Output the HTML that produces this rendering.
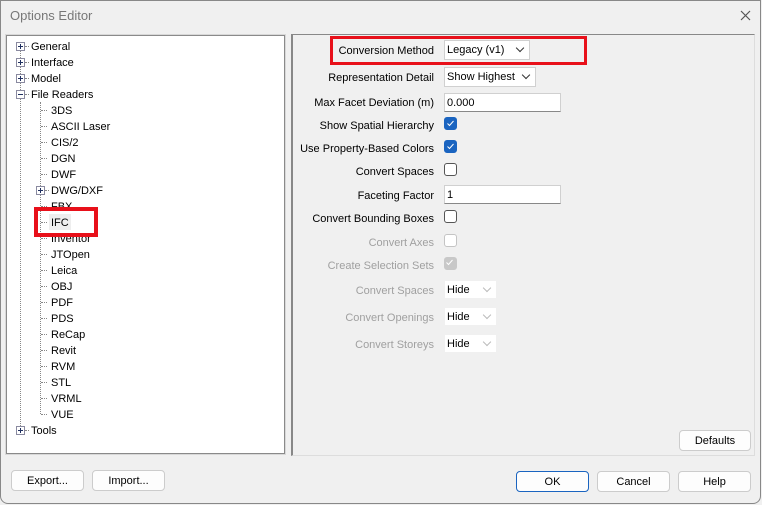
<!DOCTYPE html><html><head><style>
body{margin:0;width:762px;height:505px;background:#f0f0f0;font-family:"Liberation Sans",sans-serif;font-size:11px;color:#000;position:relative;overflow:hidden}
.a{position:absolute;white-space:nowrap}
.t{position:absolute;line-height:18px;height:16px}
.lb{position:absolute;right:328px;text-align:right;line-height:18px;white-space:nowrap}
.g{color:#a0a0a0}
.cb{position:absolute;width:11px;height:11px;border:1px solid #555;border-radius:3px;background:#fff;left:444px}
.ck{background:#1a64c0;border-color:#1a64c0}
.ck svg{position:absolute;left:1px;top:1px}
.dc{border-color:#c4c4c4;background:#fff}
.dk{background:#c8c8c8;border-color:#c8c8c8}
.in{position:absolute;background:#fff;border:1px solid #d0d0d0;border-bottom-color:#888;line-height:18px;padding-left:2px;box-sizing:border-box}
.cm{position:absolute;background:#fff;border:1px solid #d0d0d0;line-height:18px;padding-left:2px;box-sizing:border-box}
.cm i{position:absolute;right:6px;top:4px;width:5px;height:5px;border-right:1px solid #333;border-bottom:1px solid #333;transform:rotate(45deg)}
.cm.d i{border-color:#bbb}
.btn{position:absolute;background:#fdfdfd;border:1px solid #ccc;border-radius:4px;text-align:center;line-height:20px;box-sizing:border-box;height:21px}
.pl{position:absolute;width:9px;height:9px;border:1px solid #8a8aa0;background:#fff;box-sizing:border-box}
.pl:before{content:"";position:absolute;left:1px;top:3px;width:5px;height:1px;background:#203060}
.pl.p:after{content:"";position:absolute;left:3px;top:1px;width:1px;height:5px;background:#203060}
.hd{position:absolute;border-top:1px dotted #888;width:6px}
</style></head><body>
<div class="a" style="left:0;top:0;width:761px;height:504px;border:1px solid #888;border-radius:0 0 8px 8px;box-sizing:border-box"></div>
<div class="a" style="left:10px;top:8px;font-size:13px;color:#777">Options Editor</div>
<svg class="a" style="left:740px;top:10px" width="11" height="11"><path d="M1 1L10 10M10 1L1 10" stroke="#555" stroke-width="1.2"/></svg>

<div class="a" style="left:5px;top:34px;width:281px;height:421px;border:1px solid #d8d8d8;box-sizing:border-box"></div>
<div class="a" style="left:6px;top:35px;width:279px;height:419px;border:1px solid #8a8a8a;background:#fff;box-sizing:border-box"></div>
<div class="a" style="left:20px;top:51px;height:379px;border-left:1px dotted #888"></div>
<div class="a" style="left:40px;top:102px;height:312px;border-left:1px dotted #888"></div>
<div class="pl p" style="left:16px;top:42px"></div><div class="hd" style="left:25px;top:46px;width:4px"></div><div class="t" style="left:31px;top:38px">General</div>
<div class="pl p" style="left:16px;top:58px"></div><div class="hd" style="left:25px;top:62px;width:4px"></div><div class="t" style="left:31px;top:54px">Interface</div>
<div class="pl p" style="left:16px;top:74px"></div><div class="hd" style="left:25px;top:78px;width:4px"></div><div class="t" style="left:31px;top:70px">Model</div>
<div class="pl" style="left:16px;top:90px"></div><div class="hd" style="left:25px;top:94px;width:4px"></div><div class="t" style="left:31px;top:86px">File Readers</div>
<div class="hd" style="left:41px;top:110px"></div><div class="t" style="left:51px;top:102px">3DS</div>
<div class="hd" style="left:41px;top:126px"></div><div class="t" style="left:51px;top:118px">ASCII Laser</div>
<div class="hd" style="left:41px;top:142px"></div><div class="t" style="left:51px;top:134px">CIS/2</div>
<div class="hd" style="left:41px;top:158px"></div><div class="t" style="left:51px;top:150px">DGN</div>
<div class="hd" style="left:41px;top:174px"></div><div class="t" style="left:51px;top:166px">DWF</div>
<div class="pl p" style="left:36px;top:186px"></div><div class="hd" style="left:45px;top:190px;width:4px"></div><div class="t" style="left:51px;top:182px">DWG/DXF</div>
<div class="hd" style="left:41px;top:206px"></div><div class="t" style="left:51px;top:198px">FBX</div>
<div class="hd" style="left:41px;top:222px"></div><div class="t" style="left:49px;top:214px;background:#eee;padding:0 2px">IFC</div>
<div class="hd" style="left:41px;top:238px"></div><div class="t" style="left:51px;top:230px">Inventor</div>
<div class="hd" style="left:41px;top:254px"></div><div class="t" style="left:51px;top:246px">JTOpen</div>
<div class="hd" style="left:41px;top:270px"></div><div class="t" style="left:51px;top:262px">Leica</div>
<div class="hd" style="left:41px;top:286px"></div><div class="t" style="left:51px;top:278px">OBJ</div>
<div class="hd" style="left:41px;top:302px"></div><div class="t" style="left:51px;top:294px">PDF</div>
<div class="hd" style="left:41px;top:318px"></div><div class="t" style="left:51px;top:310px">PDS</div>
<div class="hd" style="left:41px;top:334px"></div><div class="t" style="left:51px;top:326px">ReCap</div>
<div class="hd" style="left:41px;top:350px"></div><div class="t" style="left:51px;top:342px">Revit</div>
<div class="hd" style="left:41px;top:366px"></div><div class="t" style="left:51px;top:358px">RVM</div>
<div class="hd" style="left:41px;top:382px"></div><div class="t" style="left:51px;top:374px">STL</div>
<div class="hd" style="left:41px;top:398px"></div><div class="t" style="left:51px;top:390px">VRML</div>
<div class="hd" style="left:41px;top:414px"></div><div class="t" style="left:51px;top:406px">VUE</div>
<div class="pl p" style="left:16px;top:426px"></div><div class="hd" style="left:25px;top:430px;width:4px"></div><div class="t" style="left:31px;top:422px">Tools</div>
<div class="a" style="left:34px;top:207px;width:64px;height:30px;border:4px solid #e8101a;box-sizing:border-box"></div>

<div class="a" style="left:291px;top:34px;width:464px;height:422px;border-left:2px solid #888;border-top:1px solid #888;border-bottom:1px solid #ddd;border-right:1px solid #ddd;box-sizing:border-box"></div>

<div class="lb" style="top:42px">Conversion Method</div>
<div class="cm" style="left:444px;top:40px;width:86px;height:20px">Legacy (v1)<i></i></div>
<div class="a" style="left:330px;top:36px;width:257px;height:29px;border:3px solid #e8101a;box-sizing:border-box"></div>
<div class="lb" style="top:69px">Representation Detail</div>
<div class="cm" style="left:444px;top:67px;width:92px;height:20px">Show Highest<i></i></div>
<div class="lb" style="top:94px">Max Facet Deviation (m)</div>
<div class="in" style="left:444px;top:93px;width:117px;height:19px">0.000</div>
<div class="lb" style="top:117px">Show Spatial Hierarchy</div>
<div class="cb ck" style="top:117px"><svg width="9" height="9"><path d="M1.5 4.5L3.5 6.5L7.5 2" fill="none" stroke="#fff" stroke-width="1"/></svg></div>
<div class="lb" style="top:140px">Use Property-Based Colors</div>
<div class="cb ck" style="top:140px"><svg width="9" height="9"><path d="M1.5 4.5L3.5 6.5L7.5 2" fill="none" stroke="#fff" stroke-width="1"/></svg></div>
<div class="lb" style="top:163px">Convert Spaces</div>
<div class="cb" style="top:163px"></div>
<div class="lb" style="top:187px">Faceting Factor</div>
<div class="in" style="left:444px;top:185px;width:117px;height:19px">1</div>
<div class="lb" style="top:210px">Convert Bounding Boxes</div>
<div class="cb" style="top:210px"></div>
<div class="lb g" style="top:234px">Convert Axes</div>
<div class="cb dc" style="top:234px"></div>
<div class="lb g" style="top:257px">Create Selection Sets</div>
<div class="cb dk" style="top:257px"><svg width="9" height="9"><path d="M1.5 4.5L3.5 6.5L7.5 2" fill="none" stroke="#fff" stroke-width="1"/></svg></div>
<div class="lb g" style="top:282px">Convert Spaces</div>
<div class="cm d" style="left:444px;top:280px;width:53px;height:19px;border-color:#f0f0f0">Hide<i></i></div>
<div class="lb g" style="top:309px">Convert Openings</div>
<div class="cm d" style="left:444px;top:307px;width:53px;height:19px;border-color:#f0f0f0">Hide<i></i></div>
<div class="lb g" style="top:336px">Convert Storeys</div>
<div class="cm d" style="left:444px;top:334px;width:53px;height:19px;border-color:#f0f0f0">Hide<i></i></div>

<div class="btn" style="left:679px;top:430px;width:72px">Defaults</div>
<div class="btn" style="left:11px;top:470px;width:73px">Export...</div>
<div class="btn" style="left:92px;top:470px;width:73px">Import...</div>
<div class="btn" style="left:516px;top:471px;width:73px;border-color:#1a64c0">OK</div>
<div class="btn" style="left:597px;top:471px;width:73px">Cancel</div>
<div class="btn" style="left:678px;top:471px;width:73px">Help</div>
</body></html>
